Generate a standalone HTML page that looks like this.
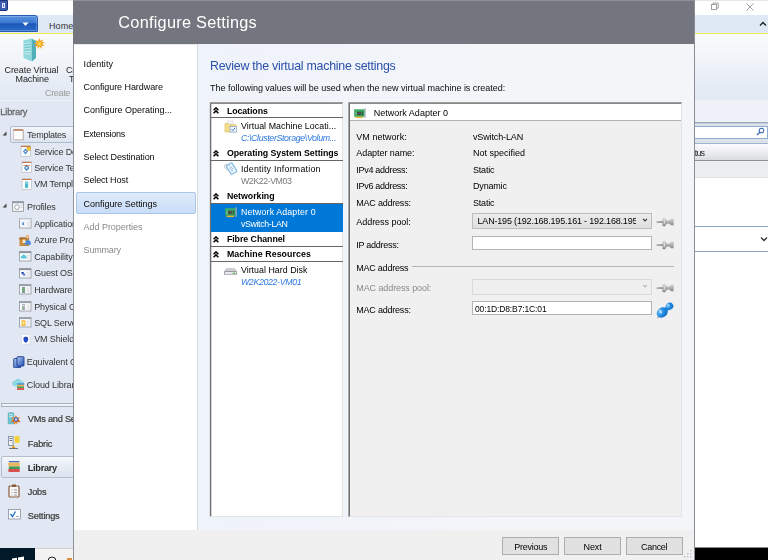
<!DOCTYPE html>
<html><head><meta charset="utf-8"><title>Configure Settings</title><style>
html,body{margin:0;padding:0}
body{width:768px;height:560px;overflow:hidden;position:relative;background:#fff;font-family:"Liberation Sans",sans-serif;}
div,span,svg{position:absolute;box-sizing:border-box}
span{white-space:pre}
#bg,#dlg{left:0;top:0;width:768px;height:560px;overflow:hidden}
#all{left:0;top:0;width:768px;height:560px;overflow:hidden;filter:blur(0.33px)}
</style></head>
<body>
<div id="all">
<div id="bg">
<div style="left:0px;top:0px;width:768px;height:15px;background:#fff"></div>
<div style="left:0px;top:0px;width:768px;height:1px;background:#e6e6e6"></div>
<div style="left:-1px;top:0px;width:9px;height:11px;background:#3a5cb0;border-radius:0 0 2px 0;border:1px solid #1c3478"><div style="left:2px;top:2px;width:3px;height:5px;background:#e8eefa"></div><div style="left:3px;top:3px;width:1px;height:3px;background:#5a78c0"></div></div>
<svg style="left:700px;top:0;width:68px;height:15px" viewBox="0 0 68 15"><g fill="none" stroke="#8a8a8a" stroke-width="0.8"><rect x="11.5" y="4.5" width="5" height="5"/><path d="M13 4.5V3h5.2v5.2H16.5"/><path d="M46.5 3.5l7 7M53.500 3.5l-7 7"/></g></svg>
<div style="left:0px;top:15px;width:768px;height:18px;background:#dfe8f5"></div>
<div style="left:-3px;top:15px;width:41px;height:17px;background:linear-gradient(#5a94e0,#3a78d0 45%,#1c58b8 52%,#2a6ccc);border:1px solid #2a5cb0;border-radius:0 3px 0 0;box-shadow:inset 0 0 0 1px rgba(255,255,255,.22)"></div>
<svg style="left:22px;top:22px;width:7px;height:5px" viewBox="0 0 7 5"><path d="M0.5 0.5h6L3.5 4z" fill="#fff"/></svg>
<svg style="left:759px;top:21px;width:8px;height:6px" viewBox="0 0 8 6"><path d="M1 4.5l3-3 3 3" fill="none" stroke="#222" stroke-width="1.4"/></svg>
<div style="left:0px;top:33px;width:768px;height:1px;background:#f4ec4a"></div>
<div style="left:0px;top:34px;width:768px;height:66px;background:linear-gradient(#fafbfd,#f1f4f9 40%,#e6ecf5 75%,#e2e9f3)"></div>
<div style="left:0px;top:100px;width:768px;height:1px;background:#eef2f8"></div>
<svg style="left:22px;top:37px;width:24px;height:26px" viewBox="0 0 24 26">
<path d="M1.500 3.500l8-2 .5 23-8.500-3.500z" fill="#8fd8dc"/><path d="M9.500 1.500l4.500 2.500v17l-4 3.500z" fill="#4fb0ba"/><path d="M2.500 7l6-1.200M2.500 9.500l6-1M2.500 12l6-.8M2.500 14.500l6-.5M2.500 17l6-.2" stroke="#d8f4f5" stroke-width=".8"/><path d="M2.500 8.200l6-1.100M2.500 10.700l6-.9M2.500 13.200l6-.6" stroke="#5ab8c0" stroke-width=".6"/>
<path d="M17.500 1l1 3 2.800-1.800-1.300 3 3.200.3-2.900 1.500 2.300 2.200-3.200-.4.300 3.200-2.200-2.400-1.700 2.700-.3-3.200-3 1 1.900-2.500-2.900-1.300 3.100-.6-1.300-2.900 2.700 1.600z" fill="#f6a21b"/><circle cx="17.500" cy="6.800" r="2" fill="#ffd34d"/>
</svg>
<div style="left:0px;top:101px;width:76px;height:447px;background:#e1e8f3"></div>
<div style="left:10px;top:126px;width:70px;height:16.5px;background:linear-gradient(#f2f6fb,#dbe4ef);border:1px solid #aebccf;border-radius:2px"></div>
<svg style="left:1.5px;top:131px;width:5px;height:5px" viewBox="0 0 5 5"><path d="M4.500 0.500v4h-4z" fill="#444"/></svg>
<svg style="left:1.5px;top:203px;width:5px;height:5px" viewBox="0 0 5 5"><path d="M4.500 0.500v4h-4z" fill="#444"/></svg>
<svg style="left:13px;top:128.500px;width:11.500px;height:12px" viewBox="0 0 11.500 12"><rect x="1.500" y="1.500" width="9.500" height="10" fill="#b9bcc4"/><rect x=".7" y=".7" width="9.300" height="10" fill="#fdfdfd" stroke="#c9b8b0" stroke-width=".7"/><rect x=".5" y=".4" width="9.700" height="1.300" fill="#b4683c"/></svg>
<svg style="left:19.8px;top:145.2px;width:11.500px;height:12px" viewBox="0 0 11.500 12"><rect x="1" y="1" width="9.500" height="10.500" fill="#fbfcfd" stroke="#b9bec8" stroke-width=".7"/><rect x="1" y=".8" width="9.500" height="1.200" fill="#c9784a"/><path d="M3 6.500l2.500-3 2.500 3-2.500 3z" fill="#3d7fc4"/><circle cx="5.500" cy="6.500" r="1" fill="#e8f0fa"/><rect x="7" y="2" width="3.500" height="3.500" fill="#f2c43a" stroke="#c89a20" stroke-width=".4"/></svg>
<svg style="left:20.5px;top:161.4px;width:11.500px;height:12px" viewBox="0 0 11.500 12"><rect x="1" y="1" width="9.500" height="10.500" fill="#fbfcfd" stroke="#b9bec8" stroke-width=".7"/><rect x="1" y=".8" width="9.500" height="1.200" fill="#c9784a"/><path d="M3 7l2.700-3.500L8.500 7 5.700 10z" fill="#3d7fc4"/><circle cx="5.700" cy="6.800" r="1.100" fill="#e8f0fa"/><path d="M2.500 4.500h6.500" stroke="#d8683a" stroke-width=".8"/></svg>
<svg style="left:20.5px;top:178px;width:11.500px;height:12px" viewBox="0 0 11.500 12"><rect x="1" y="1" width="9.500" height="10.500" fill="#fbfcfd" stroke="#b9bec8" stroke-width=".7"/><rect x="1" y=".8" width="9.500" height="1.200" fill="#c9784a"/><rect x="4" y="3.500" width="3.200" height="6.500" rx=".8" fill="#4fb8c8"/><rect x="4.700" y="4.500" width="1.800" height="1" fill="#d8f4f6"/></svg>
<svg style="left:12px;top:201px;width:12px;height:11px" viewBox="0 0 12 11"><rect x=".5" y=".5" width="11" height="9.800" fill="#f6f7f9" stroke="#8a9099" stroke-width=".8"/><rect x=".5" y=".5" width="11" height="1.800" fill="#9aa0aa"/><circle cx="5" cy="6.200" r="2.300" fill="#fff" stroke="#8a9099" stroke-width=".8"/><path d="M8.500 4.500h2M8.500 6.500h2" stroke="#b0b5be" stroke-width=".7"/></svg>
<svg style="left:19.2px;top:218px;width:12.500px;height:11px" viewBox="0 0 12.500 11"><rect x=".5" y=".5" width="11.500" height="9.500" fill="#f9fafb" stroke="#9096a0" stroke-width=".8"/><rect x=".5" y=".5" width="11.500" height="1.600" fill="#dfe3e9"/><path d="M7.500 4.200h3M7.500 6h3M7.500 7.800h3" stroke="#c9cdd4" stroke-width=".7"/><rect x="2" y="3.500" width="4" height="4.500" fill="#e8eef8"/><rect x="3.500" y="4.500" width="1.500" height="2.500" fill="#4a7fd0"/></svg>
<svg style="left:19px;top:233.8px;width:13px;height:12.500px" viewBox="0 0 13 12.500"><rect x=".5" y="3.500" width="9.500" height="8.500" fill="#c88a3c"/><rect x=".5" y="3.500" width="9.500" height="2" fill="#a86a28"/><circle cx="8.500" cy="2.800" r="2" fill="#e8b890"/><path d="M5.500 9.500a3.200 3.200 0 0 1 6.400 0v1.200H5.500z" fill="#4a8ad8"/><rect x="3.500" y="5.500" width="3" height="3.500" fill="#f4e4c8"/></svg>
<svg style="left:19.2px;top:251.2px;width:12.500px;height:11px" viewBox="0 0 12.500 11"><rect x=".5" y=".5" width="11.500" height="9.500" fill="#f9fafb" stroke="#9096a0" stroke-width=".8"/><rect x=".5" y=".5" width="11.500" height="1.600" fill="#8a9099"/><path d="M7.500 4.200h3M7.500 6h3M7.500 7.800h3" stroke="#c9cdd4" stroke-width=".7"/><path d="M2.500 7.500a1.500 1.500 0 0 1 .5-2.800 2 2 0 0 1 3.700.3 1.300 1.300 0 0 1 0 2.500z" fill="#5ac8dc"/></svg>
<svg style="left:19.2px;top:267.6px;width:12.500px;height:11px" viewBox="0 0 12.500 11"><rect x=".5" y=".5" width="11.500" height="9.500" fill="#f9fafb" stroke="#9096a0" stroke-width=".8"/><rect x=".5" y=".5" width="11.500" height="1.600" fill="#8a9099"/><path d="M7.500 4.200h3M7.500 6h3M7.500 7.800h3" stroke="#c9cdd4" stroke-width=".7"/><rect x="2.500" y="4" width="2.300" height="2.300" fill="#2a48b0"/><rect x="4" y="5.500" width="2.300" height="2.300" fill="#6a8ad8"/></svg>
<svg style="left:19.2px;top:284.2px;width:12.500px;height:11px" viewBox="0 0 12.500 11"><rect x=".5" y=".5" width="11.500" height="9.500" fill="#f9fafb" stroke="#9096a0" stroke-width=".8"/><rect x=".5" y=".5" width="11.500" height="1.600" fill="#9aa0aa"/><path d="M7.500 4.200h3M7.500 6h3M7.500 7.800h3" stroke="#c9cdd4" stroke-width=".7"/><rect x="3" y="3" width="3" height="6" fill="#8a949a"/><rect x="3.500" y="4" width="2" height="1" fill="#5ac85a"/><rect x="3.500" y="6" width="2" height="1" fill="#5ac85a"/></svg>
<svg style="left:19.2px;top:300.6px;width:12.500px;height:11px" viewBox="0 0 12.500 11"><rect x=".5" y=".5" width="11.500" height="9.500" fill="#f9fafb" stroke="#9096a0" stroke-width=".8"/><rect x=".5" y=".5" width="11.500" height="1.600" fill="#9aa0aa"/><path d="M7.500 4.200h3M7.500 6h3M7.500 7.800h3" stroke="#c9cdd4" stroke-width=".7"/><rect x="3" y="3" width="3" height="6" fill="#a8aeb6"/><rect x="3.500" y="4" width="2" height="1" fill="#f0f2f4"/><rect x="4" y="7" width="1" height="1" fill="#5ac85a"/></svg>
<svg style="left:19.2px;top:317px;width:12.500px;height:11px" viewBox="0 0 12.500 11"><rect x=".5" y=".5" width="11.500" height="9.500" fill="#f9fafb" stroke="#9096a0" stroke-width=".8"/><rect x=".5" y=".5" width="11.500" height="1.600" fill="#9aa0aa"/><path d="M7.500 4.200h3M7.500 6h3M7.500 7.800h3" stroke="#c9cdd4" stroke-width=".7"/><rect x="2.500" y="3.200" width="4" height="5.800" rx=".8" fill="#f4b428"/><rect x="3.500" y="4.500" width="2" height="3" fill="#fde9a8"/></svg>
<svg style="left:21px;top:334px;width:10px;height:11px" viewBox="0 0 10 11"><rect x=".5" y=".5" width="8.500" height="9.800" rx="1" fill="#fdfdfe" stroke="#d5d9e0" stroke-width=".7"/><path d="M2.500 3.500l2.300-1 2.300 1v2.200c0 1.500-1.200 2.500-2.300 3-1.100-.5-2.300-1.500-2.300-3z" fill="#2348c8"/></svg>
<svg style="left:12.500px;top:355.500px;width:12px;height:12.500px" viewBox="0 0 12 12.500"><defs><linearGradient id="eq" x1="0" y1="0" x2="1" y2="1"><stop offset="0" stop-color="#b4ccf4"/><stop offset="1" stop-color="#1f4fb4"/></linearGradient></defs><rect x=".7" y="2.500" width="7" height="9.300" rx=".8" fill="url(#eq)" stroke="#1a3a8a" stroke-width=".9"/><rect x="4" y=".7" width="7" height="9.300" rx=".8" fill="url(#eq)" stroke="#1a3a8a" stroke-width=".9"/></svg>
<svg style="left:12px;top:378px;width:13px;height:13px" viewBox="0 0 13 13"><path d="M2.500 8a2.500 2.500 0 0 1 .5-4.900 3.500 3.500 0 0 1 6.500.8 2.200 2.200 0 0 1 1.500 4.100z" fill="#8edbe6" stroke="#6cc4d4" stroke-width=".5"/><rect x="5" y="5.300" width="7" height="1.500" fill="#4a88d8"/><rect x="5" y="6.800" width="7" height="1.700" fill="#e8b040"/><rect x="5" y="8.500" width="7" height="1.700" fill="#4a9a50"/><rect x="5" y="10.200" width="7" height="1.700" fill="#d84a40"/></svg>
<div style="left:1px;top:403px;width:75px;height:3.5px;background:#eef2f8;border:1px solid #aab2be"></div>
<div style="left:1px;top:456px;width:75px;height:21.5px;background:linear-gradient(#f6f8fb,#e6ecf4 50%,#dbe3ee);border:1px solid #b4bfce;border-radius:2px"></div>
<svg style="left:7px;top:411px;width:15px;height:15px" viewBox="0 0 15 15"><rect x="1.200" y="1.800" width="5.500" height="11" rx=".8" fill="#6cc4d0" stroke="#4aa0b0" stroke-width=".6"/><rect x="2.200" y="3.200" width="3.500" height="1" fill="#d8f2f5"/><rect x="2.200" y="5.200" width="3.500" height="1" fill="#d8f2f5"/><g transform="translate(9 8.500)"><path d="M0-4.500l1.200 2.700 2.900-.8-1.400 2.600 2 2.200-3 .2-.5 2.900L0 3.500l-1.800 1.800-.5-2.900-3-.2 2-2.200-1.400-2.600 2.900.8z" fill="#e8892c"/><circle r="2.300" fill="#3f6fd0"/><circle r="1" fill="#eef3fc"/><path d="M-3.500 2.500l2-1.500M3.500 2.500l-2-1.500" stroke="#c8352c" stroke-width="1"/></g></svg>
<svg style="left:7px;top:435px;width:14px;height:15px" viewBox="0 0 14 15"><rect x="1.500" y="1.500" width="4.500" height="9" fill="#eef1f5" stroke="#6d7788" stroke-width=".7"/><rect x="2.500" y="3" width="2.500" height="1" fill="#6d7788"/><rect x="2.500" y="5" width="2.500" height="1" fill="#6d7788"/><rect x="7.500" y="1" width="5" height="7" rx="1" fill="#f6d23a"/><path d="M2 13.500h9M6.500 10.500v3" stroke="#555" stroke-width=".8"/><path d="M6.500 10l2 3h-4z" fill="#e89a20"/></svg>
<svg style="left:8px;top:460px;width:13px;height:13px" viewBox="0 0 13 13"><rect x=".8" y="1" width="10.500" height="1.400" fill="#3f6fc8"/><rect x=".3" y="2.400" width="11.500" height="4" rx=".8" fill="#e9b762"/><rect x=".8" y="6.400" width="11" height="2.600" rx=".6" fill="#3f9a58"/><rect x=".3" y="9" width="11.500" height="3" rx=".8" fill="#d95050"/></svg>
<svg style="left:8px;top:484px;width:12px;height:14px" viewBox="0 0 12 14"><rect x="1" y="2" width="10" height="11" rx="1" fill="#fbfbfb" stroke="#8a5a3a" stroke-width="1.200"/><rect x="4" y=".5" width="4" height="2.500" fill="#8a5a3a"/><path d="M3.500 6h1M6 6h3M3.500 8.500h1M6 8.500h3M3.500 11h1M6 11h3" stroke="#777" stroke-width=".8"/></svg>
<svg style="left:8px;top:509px;width:13px;height:11px" viewBox="0 0 13 11"><rect x=".5" y=".5" width="12" height="9.500" fill="#fbfcfe" stroke="#8b93a1" stroke-width=".8"/><path d="M2.500 5l2 2.500 3-5" fill="none" stroke="#1f6fd0" stroke-width="1.300"/><path d="M8 7.500h3" stroke="#8b93a1" stroke-width=".8"/></svg>
<div style="left:694px;top:101px;width:74px;height:21px;background:#eef2f8"></div>
<div style="left:694px;top:122px;width:74px;height:1px;background:#95a6bf"></div>
<div style="left:694px;top:123px;width:74px;height:21px;background:#dde1e8"></div>
<div style="left:694px;top:123px;width:74px;height:1px;background:#c6cfdd"></div>
<div style="left:690px;top:126px;width:77.5px;height:13px;background:#fff;border:1px solid #8eabd2"></div>
<svg style="left:756px;top:127px;width:9px;height:9px" viewBox="0 0 9 9"><circle cx="5.500" cy="3.500" r="2.300" fill="none" stroke="#3f6cb0" stroke-width="1.100"/><path d="M3.800 5.200L1 8" stroke="#3f6cb0" stroke-width="1.400"/></svg>
<div style="left:694px;top:143px;width:74px;height:18px;background:linear-gradient(#fbfbfc,#eceef0 50%,#d9dbde);border-top:1px solid #9fb4d0;border-bottom:1px solid #8c8f94"></div>
<div style="left:694px;top:161px;width:74px;height:17px;background:#eceef1;border-bottom:1px solid #e2e3e6"></div>
<div style="left:694px;top:178px;width:74px;height:370px;background:#fff"></div>
<div style="left:694px;top:226px;width:74px;height:1px;background:#8ea6c6"></div>
<div style="left:694px;top:251px;width:74px;height:1px;background:#8ea6c6"></div>
<svg style="left:760px;top:236px;width:8px;height:6px" viewBox="0 0 8 6"><path d="M1 1.500l3 3 3-3" fill="none" stroke="#333" stroke-width="1.300"/></svg>
<div style="left:0px;top:548px;width:768px;height:12px;background:#000"></div>
<div style="left:695px;top:547px;width:73px;height:1px;background:#8a8a8a"></div>
<div style="left:0px;top:548px;width:35px;height:12px;background:#02192a"></div>
<div style="left:35px;top:548px;width:60px;height:12px;background:#f2f2f2;border-top:1px solid #cfcfcf"></div>
<svg style="left:10.500px;top:556.200px;width:14px;height:7px" viewBox="0 0 14 7"><path d="M1 2.500l5-.8V7H1zM7 1.500L13 .5V7H7z" fill="#fff"/></svg>
<svg style="left:46px;top:556px;width:12px;height:7px" viewBox="0 0 12 7"><circle cx="6" cy="5" r="4" fill="none" stroke="#222" stroke-width="1"/></svg>
<div style="left:66.5px;top:558px;width:5px;height:2px;background:#e0903a"></div>
<span style="left:49.00px;top:21px;font-size:9px;line-height:10px;color:#333;letter-spacing:0.121px;">Home</span><span style="left:4.50px;top:65px;font-size:9px;line-height:10px;color:#1e1e1e;letter-spacing:-0.062px;">Create Virtual</span><span style="left:15.50px;top:74px;font-size:9px;line-height:10px;color:#1e1e1e;letter-spacing:-0.104px;">Machine</span><span style="left:66.00px;top:65px;font-size:9px;line-height:10px;color:#1e1e1e;letter-spacing:-0.270px;">Create</span><span style="left:69.00px;top:74px;font-size:9px;line-height:10px;color:#1e1e1e;letter-spacing:-0.274px;">Template</span><span style="left:45.00px;top:88px;font-size:9px;line-height:10px;color:#9a9a9a;letter-spacing:-0.336px;">Create</span><span style="left:0.30px;top:107px;font-size:9.2px;line-height:10px;color:#666;letter-spacing:-0.156px;-webkit-text-stroke:0.3px #666;">Library</span><span style="left:27.10px;top:130px;font-size:9px;line-height:10px;color:#333;letter-spacing:-0.237px;">Templates</span><span style="left:34.20px;top:147px;font-size:9px;line-height:10px;color:#333;letter-spacing:-0.128px;">Service Deployment Configurations</span><span style="left:34.20px;top:163px;font-size:9px;line-height:10px;color:#333;letter-spacing:-0.129px;">Service Templates</span><span style="left:34.20px;top:179px;font-size:9px;line-height:10px;color:#333;letter-spacing:-0.142px;">VM Templates</span><span style="left:27.10px;top:202px;font-size:9px;line-height:10px;color:#333;letter-spacing:-0.202px;">Profiles</span><span style="left:34.20px;top:219px;font-size:9px;line-height:10px;color:#333;letter-spacing:-0.115px;">Application Profiles</span><span style="left:34.20px;top:235px;font-size:9px;line-height:10px;color:#333;letter-spacing:-0.120px;">Azure Profiles</span><span style="left:34.20px;top:252px;font-size:9px;line-height:10px;color:#333;letter-spacing:-0.114px;">Capability Profiles</span><span style="left:34.20px;top:268px;font-size:9px;line-height:10px;color:#333;letter-spacing:-0.127px;">Guest OS Profiles</span><span style="left:34.20px;top:285px;font-size:9px;line-height:10px;color:#333;letter-spacing:-0.126px;">Hardware Profiles</span><span style="left:34.20px;top:302px;font-size:9px;line-height:10px;color:#333;letter-spacing:-0.125px;">Physical Computer Profiles</span><span style="left:34.20px;top:318px;font-size:9px;line-height:10px;color:#333;letter-spacing:-0.125px;">SQL Server Profiles</span><span style="left:34.20px;top:334px;font-size:9px;line-height:10px;color:#333;letter-spacing:-0.132px;">VM Shielding Data</span><span style="left:26.75px;top:357px;font-size:9px;line-height:10px;color:#333;letter-spacing:-0.125px;">Equivalent Objects</span><span style="left:26.75px;top:380px;font-size:9px;line-height:10px;color:#333;letter-spacing:-0.121px;">Cloud Libraries</span><span style="left:27.80px;top:414px;font-size:9.2px;line-height:10px;color:#3a3a3a;letter-spacing:-0.208px;-webkit-text-stroke:0.22px #3a3a3a;">VMs and Services</span><span style="left:27.80px;top:439px;font-size:9.2px;line-height:10px;color:#3a3a3a;letter-spacing:-0.191px;-webkit-text-stroke:0.22px #3a3a3a;">Fabric</span><span style="left:27.80px;top:463px;font-size:9.2px;line-height:10px;color:#2a2a2a;letter-spacing:-0.312px;font-weight:700;">Library</span><span style="left:27.80px;top:487px;font-size:9.2px;line-height:10px;color:#3a3a3a;letter-spacing:-0.218px;-webkit-text-stroke:0.22px #3a3a3a;">Jobs</span><span style="left:27.80px;top:511px;font-size:9.2px;line-height:10px;color:#3a3a3a;letter-spacing:-0.187px;-webkit-text-stroke:0.22px #3a3a3a;">Settings</span><span style="left:684.00px;top:148px;font-size:9px;line-height:10px;color:#2a2a2a;letter-spacing:-0.886px;">Status</span>
</div>
<div id="dlg">
<div style="left:73px;top:0px;width:621.5px;height:560px;background:#fff;border-left:1px solid #8f9297;border-right:1px solid #8a8d93"></div>
<div style="left:73px;top:0px;width:621px;height:44px;background:#73767e"></div>
<div style="left:74px;top:44px;width:619.5px;height:1px;background:#e6e7e9"></div>
<div style="left:73px;top:0px;width:621px;height:1px;background:#8e9097"></div>
<div style="left:197px;top:44px;width:496.5px;height:486px;background:linear-gradient(90deg,#eff3fa,#f3f5f9 60%,#f4f5f8);border-left:1px solid #d6dbe3"></div>
<div style="left:75.5px;top:192px;width:120px;height:22px;background:linear-gradient(#dfebfb,#c8ddf8);border:1px solid #a9c5ea;border-radius:2px"></div>
<div style="left:74px;top:529.5px;width:619.5px;height:30.5px;background:#f0f0f0"></div>
<div style="left:502px;top:537px;width:57px;height:18px;background:#e1e1e1;border:1px solid #adadad"></div>
<div style="left:564px;top:537px;width:57px;height:18px;background:#e1e1e1;border:1px solid #adadad"></div>
<div style="left:626px;top:537px;width:57px;height:18px;background:#e1e1e1;border:1px solid #adadad"></div>
<svg style="left:684px;top:550px;width:9px;height:9px" viewBox="0 0 9 9"><g fill="#c4c6cb"><rect x="6" y="0" width="1.500" height="1.500"/><rect x="3" y="3" width="1.500" height="1.500"/><rect x="6" y="3" width="1.500" height="1.500"/><rect x="0" y="6" width="1.500" height="1.500"/><rect x="3" y="6" width="1.500" height="1.500"/><rect x="6" y="6" width="1.500" height="1.500"/></g></svg>
<div style="left:209px;top:102px;width:134px;height:415px;background:#fff;border-top:2px solid #8a8a8a;border-left:2px solid #707070;border-right:1px solid #e3e3e3;border-bottom:1px solid #e3e3e3"></div>
<div style="left:209px;top:102px;width:134px;height:1px;background:#9c9c9c"></div>
<div style="left:209px;top:102px;width:1px;height:415px;background:#dfe2e8"></div>
<div style="left:211px;top:104px;width:1px;height:412px;background:#d4d4d4"></div>
<svg style="left:213px;top:107.0px;width:6px;height:7px" viewBox="0 0 6 7"><path d="M.6 3.200L3 .9l2.400 2.300M.6 6.200L3 3.900l2.400 2.300" fill="none" stroke="#000" stroke-width="1.500"/></svg>
<div style="left:211px;top:117px;width:131.5px;height:1px;background:#666"></div>
<svg style="left:213px;top:149.5px;width:6px;height:7px" viewBox="0 0 6 7"><path d="M.6 3.200L3 .9l2.400 2.300M.6 6.200L3 3.900l2.400 2.300" fill="none" stroke="#000" stroke-width="1.500"/></svg>
<div style="left:211px;top:160px;width:131.5px;height:1px;background:#666"></div>
<svg style="left:213px;top:192.5px;width:6px;height:7px" viewBox="0 0 6 7"><path d="M.6 3.200L3 .9l2.400 2.300M.6 6.200L3 3.900l2.400 2.300" fill="none" stroke="#000" stroke-width="1.500"/></svg>
<div style="left:211px;top:203px;width:131.5px;height:1px;background:#666"></div>
<svg style="left:213px;top:235.75px;width:6px;height:7px" viewBox="0 0 6 7"><path d="M.6 3.200L3 .9l2.400 2.300M.6 6.200L3 3.900l2.400 2.300" fill="none" stroke="#000" stroke-width="1.500"/></svg>
<div style="left:211px;top:246px;width:131.5px;height:1px;background:#666"></div>
<svg style="left:213px;top:250.5px;width:6px;height:7px" viewBox="0 0 6 7"><path d="M.6 3.200L3 .9l2.400 2.300M.6 6.200L3 3.900l2.400 2.300" fill="none" stroke="#000" stroke-width="1.500"/></svg>
<div style="left:211px;top:261px;width:131.5px;height:1px;background:#666"></div>
<div style="left:211px;top:204px;width:132px;height:28px;background:#0078d7"></div>
<svg style="left:224px;top:119.500px;width:14px;height:13px" viewBox="0 0 14 13"><path d="M1 3.500h4l1 1.200h6V12H1z" fill="#f4dd88" stroke="#d9bb58" stroke-width=".6"/><rect x="6" y="6.500" width="6.500" height="5.500" fill="#f8fbff" stroke="#7c9cc8" stroke-width=".7"/><path d="M7.500 9.200l1.300 1.300 2.200-2.600" fill="none" stroke="#2a6fd0" stroke-width="1"/><rect x="4" y="1" width="5" height="3" fill="#fafafa" stroke="#c8c8c8" stroke-width=".5"/></svg>
<svg style="left:224px;top:162px;width:14px;height:13.500px" viewBox="0 0 14 13.500"><path d="M3.500 2.200C1.200 1.800.3 3.200.8 5.200c.4 1.600 1.300 2.600 2.600 2.900" fill="none" stroke="#a8a8a8" stroke-width=".7"/><g transform="rotate(-32 7.500 6.800)"><rect x="4.300" y="1.600" width="6.600" height="10.200" rx="1.300" fill="#f6fafe" stroke="#86bce2" stroke-width="1.300"/><path d="M6 5.500h3.200M6 7.200h3.200M6 8.900h2.200" stroke="#6ea4dc" stroke-width=".7"/><circle cx="7.600" cy="3.300" r=".7" fill="#86bce2"/></g></svg>
<svg style="left:224.8px;top:207.2px;width:12.500px;height:10.500px" viewBox="0 0 12.500 10.500"><rect x=".2" y="1.500" width="10.500" height="7.300" rx=".6" fill="#2f9e5c"/><rect x=".2" y="1.500" width="10.500" height="1.200" fill="#47b874"/><rect x="3" y="3.800" width="4" height="3.300" fill="#4a4f4c"/><rect x="1.500" y="3.500" width="1" height="3.800" fill="#8fd0a4"/><rect x="7.800" y="3.500" width="1.300" height="3.800" fill="#3a5a44"/><rect x="1.500" y="8.600" width="7.500" height="1.500" fill="#e8b428"/><path d="M11.100 .2v9.800" stroke="#a9b0b8" stroke-width="1.200"/></svg>
<svg style="left:224.300px;top:267.800px;width:13px;height:7.400px" viewBox="0 0 14 8"><path d="M2.500 .8h9l2 3.200H.5z" fill="#d6d7db" stroke="#9a9ca2" stroke-width=".6"/><rect x=".5" y="3.700" width="13" height="3.800" rx="1" fill="#e9e9ee" stroke="#84868c" stroke-width=".9"/><rect x="9.500" y="5" width="2.500" height="1.300" fill="#4fb24a"/></svg>
<div style="left:348px;top:102px;width:334px;height:415px;background:#f0f0f0;border-top:2px solid #8a8a8a;border-left:2px solid #707070;border-right:1px solid #e3e3e3;border-bottom:1px solid #e3e3e3"></div>
<div style="left:348px;top:102px;width:334px;height:1px;background:#9c9c9c"></div>
<div style="left:348px;top:102px;width:1px;height:415px;background:#a8a8a8"></div>
<div style="left:350px;top:104px;width:331px;height:17px;background:#fff;border-bottom:1px solid #b2b2b2"></div>
<svg style="left:354px;top:107.9px;width:12.500px;height:10.500px" viewBox="0 0 12.500 10.500"><rect x=".2" y="1.500" width="10.500" height="7.300" rx=".6" fill="#2f9e5c"/><rect x=".2" y="1.500" width="10.500" height="1.200" fill="#47b874"/><rect x="3" y="3.800" width="4" height="3.300" fill="#4a4f4c"/><rect x="1.500" y="3.500" width="1" height="3.800" fill="#8fd0a4"/><rect x="7.800" y="3.500" width="1.300" height="3.800" fill="#3a5a44"/><rect x="1.500" y="8.600" width="7.500" height="1.500" fill="#e8b428"/><path d="M11.100 .2v9.800" stroke="#a9b0b8" stroke-width="1.200"/></svg>
<div style="left:412px;top:266px;width:262px;height:1px;background:#b4b4b4"></div>
<div style="left:472px;top:213px;width:180px;height:16px;background:linear-gradient(#ebebeb,#dfdfdf);border:1px solid #bdbdbd"></div>
<div style="left:477.5px;top:213px;width:158.5px;height:16px;overflow:hidden"><span style="left:0;top:3px;font-size:9px;line-height:10px;color:#000;letter-spacing:-0.179px">LAN-195 (192.168.195.161 - 192.168.195.170)</span></div>
<svg style="left:642.2px;top:218.1px;width:6px;height:4px" viewBox="0 0 6 4"><path d="M1 .800L3 2.800l2-2" fill="none" stroke="#3a3a3a" stroke-width="1.200"/></svg>
<div style="left:472px;top:236px;width:180px;height:14px;background:#fff;border:1px solid #b4b4b4"></div>
<div style="left:472px;top:279px;width:180px;height:16px;background:#efefef;border:1px solid #dadada"></div>
<svg style="left:642.2px;top:284.1px;width:6px;height:4px" viewBox="0 0 6 4"><path d="M1 .800L3 2.800l2-2" fill="none" stroke="#b8b8b8" stroke-width="1.200"/></svg>
<div style="left:472px;top:301px;width:180px;height:14px;background:#fff;border:1px solid #b4b4b4"></div>
<svg style="left:656px;top:217.2px;width:19px;height:10px" viewBox="0 0 19 10"><defs><linearGradient id="pg0" x1="0" y1="0" x2="0" y2="1"><stop offset="0" stop-color="#d9d9d9"/><stop offset=".45" stop-color="#b4b4b4"/><stop offset="1" stop-color="#7e7e7e"/></linearGradient></defs><path d="M.5 5.100L7 4.600v1z" fill="#6a6a6a" stroke="#7a7a7a" stroke-width=".5"/><path d="M6.400 1.500Q7.600.4 9.200.7c.5 1.900 1.300 2.700 3 2.900 1.600-.2 2.300-.9 2.800-1.900h2.700v6.600H15c-.5-1-1.200-1.700-2.800-1.900-1.700.2-2.500 1-3 2.900C7.600 9.600 6.400 8.500 6.400 8.500z" fill="url(#pg0)"/><path d="M8 2.500c.5 1.500.5 3.500 0 5" stroke="#ededed" stroke-width=".9" fill="none"/></svg>
<svg style="left:656px;top:240.2px;width:19px;height:10px" viewBox="0 0 19 10"><defs><linearGradient id="pg1" x1="0" y1="0" x2="0" y2="1"><stop offset="0" stop-color="#d9d9d9"/><stop offset=".45" stop-color="#b4b4b4"/><stop offset="1" stop-color="#7e7e7e"/></linearGradient></defs><path d="M.5 5.100L7 4.600v1z" fill="#6a6a6a" stroke="#7a7a7a" stroke-width=".5"/><path d="M6.400 1.500Q7.600.4 9.200.7c.5 1.900 1.300 2.700 3 2.900 1.600-.2 2.300-.9 2.800-1.900h2.700v6.600H15c-.5-1-1.200-1.700-2.800-1.900-1.700.2-2.500 1-3 2.900C7.600 9.600 6.400 8.500 6.400 8.500z" fill="url(#pg1)"/><path d="M8 2.500c.5 1.500.5 3.500 0 5" stroke="#ededed" stroke-width=".9" fill="none"/></svg>
<svg style="left:656px;top:282.8px;width:19px;height:10px" viewBox="0 0 19 10"><defs><linearGradient id="pg2" x1="0" y1="0" x2="0" y2="1"><stop offset="0" stop-color="#d9d9d9"/><stop offset=".45" stop-color="#b4b4b4"/><stop offset="1" stop-color="#7e7e7e"/></linearGradient></defs><path d="M.5 5.100L7 4.600v1z" fill="#6a6a6a" stroke="#7a7a7a" stroke-width=".5"/><path d="M6.400 1.500Q7.600.4 9.200.7c.5 1.900 1.300 2.700 3 2.900 1.600-.2 2.300-.9 2.800-1.900h2.700v6.600H15c-.5-1-1.200-1.700-2.800-1.900-1.700.2-2.500 1-3 2.900C7.600 9.600 6.400 8.500 6.400 8.500z" fill="url(#pg2)"/><path d="M8 2.500c.5 1.500.5 3.500 0 5" stroke="#ededed" stroke-width=".9" fill="none"/></svg>
<svg style="left:655px;top:300px;width:21px;height:20px" viewBox="0 0 21 20"><defs><radialGradient id="bp1" cx=".35" cy=".3" r=".8"><stop offset="0" stop-color="#6fc0f8"/><stop offset=".5" stop-color="#1f8ae2"/><stop offset="1" stop-color="#1368bc"/></radialGradient></defs><path d="M2.500 18l3-3.500" stroke="#8a8a8a" stroke-width="1.100"/><ellipse cx="7.200" cy="12.500" rx="5.800" ry="4.900" transform="rotate(-38 7.200 12.500)" fill="url(#bp1)"/><path d="M9.500 8.500l2.500-3 3 2.500-3 3.500z" fill="#1c7cd4"/><ellipse cx="14.500" cy="6.300" rx="3.900" ry="3.500" transform="rotate(-38 14.500 6.300)" fill="url(#bp1)"/><ellipse cx="5.500" cy="11.500" rx="1.200" ry="2.200" transform="rotate(-38 5.500 11.500)" fill="#bfe2fb" opacity=".85"/><ellipse cx="13.300" cy="5.200" rx="1" ry="1.600" transform="rotate(-38 13.300 5.200)" fill="#a6d6fa" opacity=".8"/></svg>
<span style="left:118.30px;top:13px;font-size:16.3px;line-height:18px;color:#fff;letter-spacing:0.264px;">Configure Settings</span><span style="left:83.60px;top:59px;font-size:9px;line-height:10px;color:#0a0a0a;letter-spacing:0.046px;">Identity</span><span style="left:83.60px;top:82px;font-size:9px;line-height:10px;color:#0a0a0a;letter-spacing:-0.064px;">Configure Hardware</span><span style="left:83.60px;top:105px;font-size:9px;line-height:10px;color:#0a0a0a;letter-spacing:-0.007px;">Configure Operating...</span><span style="left:83.60px;top:129px;font-size:9px;line-height:10px;color:#0a0a0a;letter-spacing:-0.263px;">Extensions</span><span style="left:83.60px;top:152px;font-size:9px;line-height:10px;color:#0a0a0a;letter-spacing:-0.091px;">Select Destination</span><span style="left:83.60px;top:175px;font-size:9px;line-height:10px;color:#0a0a0a;letter-spacing:-0.148px;">Select Host</span><span style="left:83.60px;top:199px;font-size:9px;line-height:10px;color:#0a0a0a;letter-spacing:-0.036px;">Configure Settings</span><span style="left:83.60px;top:222px;font-size:9px;line-height:10px;color:#8a8a8a;letter-spacing:-0.046px;">Add Properties</span><span style="left:83.60px;top:245px;font-size:9px;line-height:10px;color:#8a8a8a;letter-spacing:-0.195px;">Summary</span><span style="left:210.00px;top:59px;font-size:12.4px;line-height:14px;color:#2a50a8;letter-spacing:-0.249px;">Review the virtual machine settings</span><span style="left:210.00px;top:83px;font-size:9px;line-height:10px;color:#0a0a0a;letter-spacing:-0.012px;">The following values will be used when the new virtual machine is created:</span><span style="left:514.20px;top:542px;font-size:9px;line-height:10px;color:#000;letter-spacing:-0.252px;">Previous</span><span style="left:583.50px;top:542px;font-size:9px;line-height:10px;color:#000;letter-spacing:-0.066px;">Next</span><span style="left:641.00px;top:542px;font-size:9px;line-height:10px;color:#000;letter-spacing:-0.294px;">Cancel</span><span style="left:226.90px;top:106px;font-size:8.8px;line-height:10px;color:#000;letter-spacing:-0.077px;font-weight:700;">Locations</span><span style="left:226.90px;top:148px;font-size:8.8px;line-height:10px;color:#000;letter-spacing:-0.034px;font-weight:700;">Operating System Settings</span><span style="left:226.90px;top:191px;font-size:8.8px;line-height:10px;color:#000;letter-spacing:-0.031px;font-weight:700;">Networking</span><span style="left:226.90px;top:234px;font-size:8.8px;line-height:10px;color:#000;letter-spacing:-0.043px;font-weight:700;">Fibre Channel</span><span style="left:226.90px;top:249px;font-size:8.8px;line-height:10px;color:#000;letter-spacing:0.086px;font-weight:700;">Machine Resources</span><span style="left:240.90px;top:121px;font-size:8.8px;line-height:10px;color:#000;letter-spacing:0.065px;">Virtual Machine Locati...</span><span style="left:240.90px;top:133px;font-size:8.8px;line-height:10px;color:#2a78e0;letter-spacing:-0.354px;font-style:italic;">C:\ClusterStorage\Volum...</span><span style="left:240.90px;top:164px;font-size:8.8px;line-height:10px;color:#000;letter-spacing:0.252px;">Identity Information</span><span style="left:240.90px;top:176px;font-size:8.8px;line-height:10px;color:#7a7a7a;letter-spacing:-0.417px;">W2K22-VM03</span><span style="left:240.90px;top:207px;font-size:8.8px;line-height:10px;color:#fff;letter-spacing:0.146px;">Network Adapter 0</span><span style="left:240.90px;top:219px;font-size:8.8px;line-height:10px;color:#fff;letter-spacing:-0.342px;">vSwitch-LAN</span><span style="left:240.90px;top:265px;font-size:8.8px;line-height:10px;color:#000;letter-spacing:0.044px;">Virtual Hard Disk</span><span style="left:240.90px;top:277px;font-size:8.8px;line-height:10px;color:#2a78e0;letter-spacing:-0.350px;font-style:italic;">W2K2022-VM01</span><span style="left:373.75px;top:108px;font-size:9px;line-height:10px;color:#000;letter-spacing:0.012px;">Network Adapter 0</span><span style="left:356.25px;top:132px;font-size:9px;line-height:10px;color:#000;letter-spacing:0.044px;">VM network:</span><span style="left:356.25px;top:148px;font-size:9px;line-height:10px;color:#000;letter-spacing:-0.061px;">Adapter name:</span><span style="left:356.25px;top:165px;font-size:9px;line-height:10px;color:#000;letter-spacing:-0.291px;">IPv4 address:</span><span style="left:356.25px;top:181px;font-size:9px;line-height:10px;color:#000;letter-spacing:-0.291px;">IPv6 address:</span><span style="left:356.25px;top:198px;font-size:9px;line-height:10px;color:#000;letter-spacing:-0.211px;">MAC address:</span><span style="left:356.25px;top:217px;font-size:9px;line-height:10px;color:#000;letter-spacing:-0.042px;">Address pool:</span><span style="left:356.25px;top:240px;font-size:9px;line-height:10px;color:#000;letter-spacing:-0.261px;">IP address:</span><span style="left:356.25px;top:263px;font-size:9px;line-height:10px;color:#000;letter-spacing:-0.230px;">MAC address</span><span style="left:356.25px;top:283px;font-size:9px;line-height:10px;color:#8a8a8a;letter-spacing:-0.091px;">MAC address pool:</span><span style="left:356.25px;top:305px;font-size:9px;line-height:10px;color:#000;letter-spacing:-0.211px;">MAC address:</span><span style="left:473.00px;top:132px;font-size:9px;line-height:10px;color:#000;letter-spacing:-0.138px;">vSwitch-LAN</span><span style="left:473.00px;top:148px;font-size:9px;line-height:10px;color:#000;letter-spacing:-0.002px;">Not specified</span><span style="left:473.00px;top:165px;font-size:9px;line-height:10px;color:#000;letter-spacing:-0.211px;">Static</span><span style="left:473.00px;top:181px;font-size:9px;line-height:10px;color:#000;letter-spacing:-0.181px;">Dynamic</span><span style="left:473.00px;top:198px;font-size:9px;line-height:10px;color:#000;letter-spacing:-0.211px;">Static</span><span style="left:475.00px;top:304px;font-size:8.5px;line-height:10px;color:#000;letter-spacing:-0.131px;">00:1D:D8:B7:1C:01</span>
</div>
</div>
</body></html>
